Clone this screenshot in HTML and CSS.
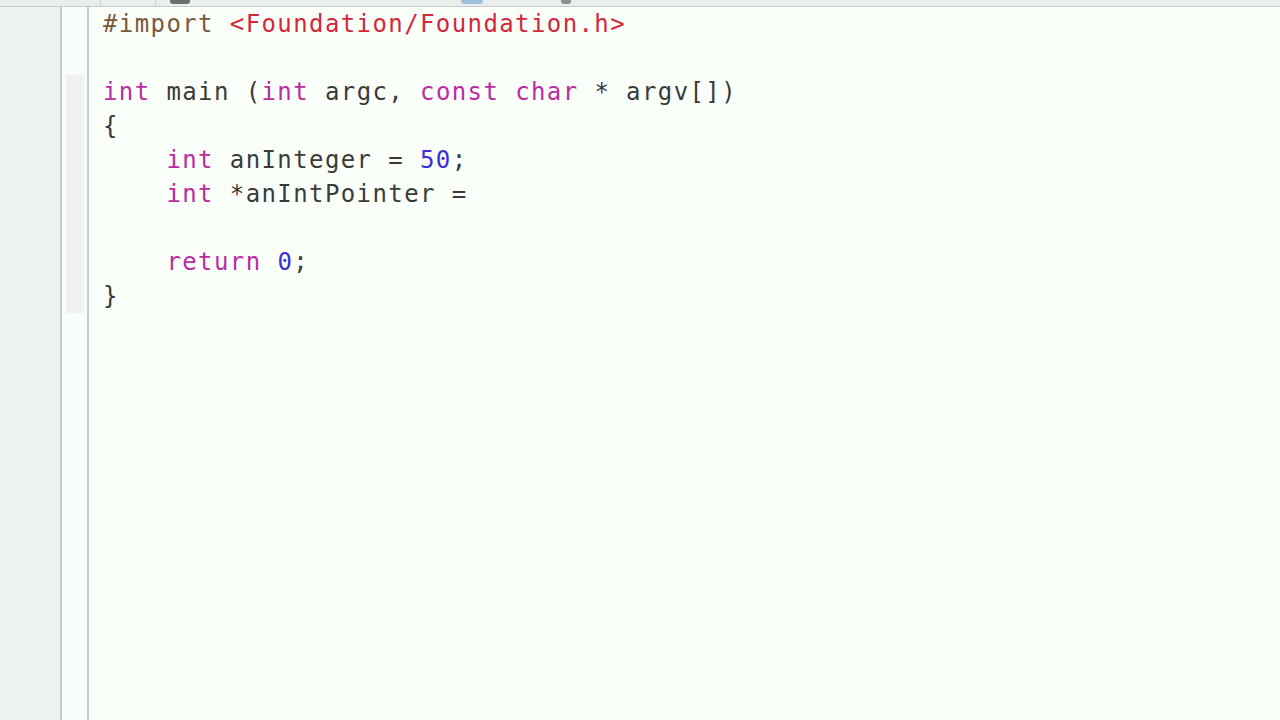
FILE: index.html
```html
<!DOCTYPE html>
<html>
<head>
<meta charset="utf-8">
<link rel="stylesheet" href="styles.css">
</head>
<body>
<div class="app">
  <div class="topbar">
    <span class="sep sep1"></span>
    <span class="sep sep2"></span>
    <span class="blob blob-dark"></span>
    <span class="blob blob-blue"></span>
    <span class="blob blob-grey"></span>
  </div>
  <div class="main">
    <div class="sidebar"></div>
    <div class="gutter"><div class="fold"></div></div>
    <div class="editor">
<pre class="code"><span class="pp">#import</span> <span class="str">&lt;Foundation/Foundation.h&gt;</span>

<span class="kw">int</span> main (<span class="kw">int</span> argc, <span class="kw">const</span> <span class="kw">char</span> * argv[])
{
    <span class="kw">int</span> anInteger = <span class="num">50</span>;
    <span class="kw">int</span> *anIntPointer =

    <span class="kw">return</span> <span class="num">0</span>;
}</pre>
    </div>
  </div>
</div>
</body>
</html>
```
FILE: styles.css
```css
html, body {
  margin: 0;
  padding: 0;
  width: 1280px;
  height: 720px;
  overflow: hidden;
  background: #fafffa;
}
.app {
  display: flex;
  flex-direction: column;
  width: 1280px;
  height: 720px;
}
.topbar {
  height: 6px;
  background: #eaeeea;
  border-bottom: 1px solid #c9cdc9;
  display: flex;
  align-items: flex-start;
  flex-shrink: 0;
}
.sep {
  width: 1px;
  height: 6px;
  background: #cfd3cf;
}
.sep1 { margin-left: 100px; }
.sep2 { margin-left: 54px; }
.blob {
  height: 4px;
  border-radius: 0 0 3px 3px;
}
.blob-dark { margin-left: 14px; width: 20px; background: #6a6e6a; }
.blob-blue { margin-left: 271px; width: 22px; background: #9ec0dc; }
.blob-grey { margin-left: 78px; width: 10px; background: #8c908c; }
.main {
  flex: 1;
  display: flex;
}
.sidebar {
  width: 60px;
  background: #eef2ee;
  border-right: 2px solid #c8ccc8;
}
.gutter {
  width: 25px;
  background: #f9fdf9;
  border-right: 2px solid #c8ccc8;
  padding: 68px 3px 0 4px;
  box-sizing: border-box;
  width: 27px;
}
.fold {
  height: 238px;
  background: #eef1ee;
}
.editor {
  flex: 1;
  background: #fafffa;
  padding-left: 14px;
}
.code {
  margin: 0;
  font-family: "DejaVu Sans Mono", "Liberation Mono", monospace;
  font-size: 24px;
  letter-spacing: 1.4px;
  line-height: 34px;
  color: #3a3a3a;
}
.pp { color: #7a5a3c; }
.str { color: #d4283a; }
.kw { color: #bb2ca2; }
.num { color: #3e2ed8; }
```
